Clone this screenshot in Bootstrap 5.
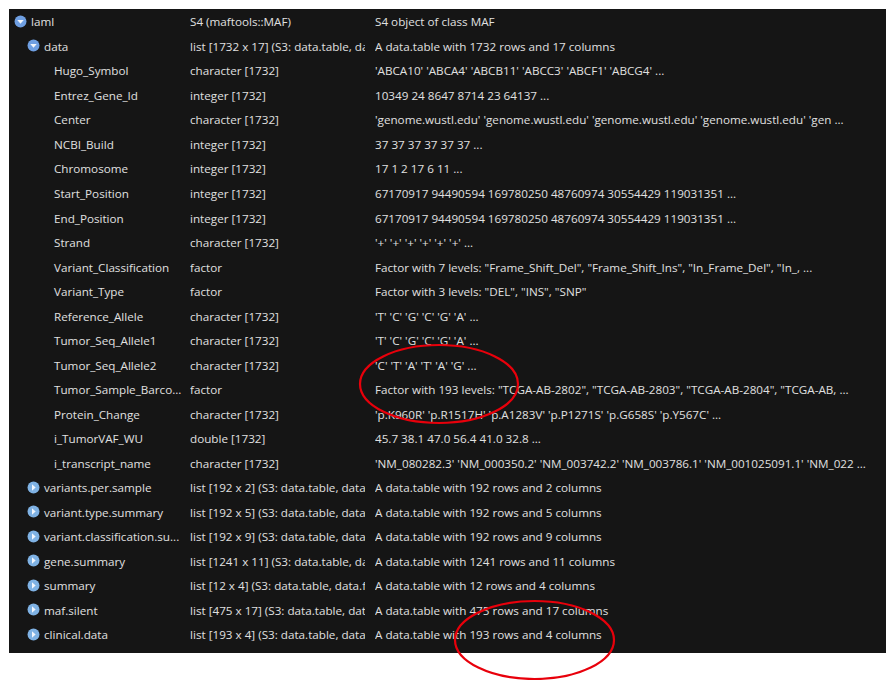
<!DOCTYPE html>
<html lang="en"><head><meta charset="utf-8"><title>laml</title>
<link href="https://cdn.jsdelivr.net/npm/bootstrap@5.3.0/dist/css/bootstrap.min.css" rel="stylesheet">
<style>
html,body{background:#fff;margin:0;height:680px;overflow:hidden}
.envpanel{margin:9px 0 0 9px;width:877px;height:644px;background:#151515;color:#e0e0e0;font:11.68px/24.52px "Open Sans",sans-serif;padding-top:1.4px}
.envrow{height:24.52px;white-space:nowrap}
.cname{width:181px;flex:none;overflow:hidden;text-overflow:ellipsis}
.lv0{padding-left:22px}.lv1{padding-left:35px}.lv2{padding-left:45px}
.ctype{width:175px;margin-right:10px;flex:none;overflow:hidden}
.cval{flex:1;overflow:hidden}
.twist{position:relative;display:inline-block;width:0;height:0}
.twist svg{position:absolute;left:-17.5px;top:-11.5px;width:13px;height:13px}
.scribble{position:absolute;left:0;top:0;pointer-events:none}
</style></head><body>
<div class="envpanel">
<div class="envrow d-flex"><div class="cname lv0"><span class="twist"><svg viewBox="0 0 12 12"><circle cx="6" cy="6" r="5.5" fill="#6f9fe2"/><path d="M3 4.6h6L6 8z" fill="#f2f6fc"/></svg></span>laml</div><div class="ctype">S4 (maftools::MAF)</div><div class="cval">S4 object of class MAF</div></div>
<div class="envrow d-flex"><div class="cname lv1"><span class="twist"><svg viewBox="0 0 12 12"><circle cx="6" cy="6" r="5.5" fill="#6f9fe2"/><path d="M3 4.6h6L6 8z" fill="#f2f6fc"/></svg></span>data</div><div class="ctype">list [1732 x 17] (S3: data.table, data.frame)</div><div class="cval">A data.table with 1732 rows and 17 columns</div></div>
<div class="envrow d-flex"><div class="cname lv2">Hugo_Symbol</div><div class="ctype">character [1732]</div><div class="cval">'ABCA10' 'ABCA4' 'ABCB11' 'ABCC3' 'ABCF1' 'ABCG4' ...</div></div>
<div class="envrow d-flex"><div class="cname lv2">Entrez_Gene_Id</div><div class="ctype">integer [1732]</div><div class="cval">10349 24 8647 8714 23 64137 ...</div></div>
<div class="envrow d-flex"><div class="cname lv2">Center</div><div class="ctype">character [1732]</div><div class="cval">'genome.wustl.edu' 'genome.wustl.edu' 'genome.wustl.edu' 'genome.wustl.edu' 'gen ...</div></div>
<div class="envrow d-flex"><div class="cname lv2">NCBI_Build</div><div class="ctype">integer [1732]</div><div class="cval">37 37 37 37 37 37 ...</div></div>
<div class="envrow d-flex"><div class="cname lv2">Chromosome</div><div class="ctype">integer [1732]</div><div class="cval">17 1 2 17 6 11 ...</div></div>
<div class="envrow d-flex"><div class="cname lv2">Start_Position</div><div class="ctype">integer [1732]</div><div class="cval">67170917 94490594 169780250 48760974 30554429 119031351 ...</div></div>
<div class="envrow d-flex"><div class="cname lv2">End_Position</div><div class="ctype">integer [1732]</div><div class="cval">67170917 94490594 169780250 48760974 30554429 119031351 ...</div></div>
<div class="envrow d-flex"><div class="cname lv2">Strand</div><div class="ctype">character [1732]</div><div class="cval">'+' '+' '+' '+' '+' '+' ...</div></div>
<div class="envrow d-flex"><div class="cname lv2">Variant_Classification</div><div class="ctype">factor</div><div class="cval">Factor with 7 levels: "Frame_Shift_Del", "Frame_Shift_Ins", "In_Frame_Del", "In_, ...</div></div>
<div class="envrow d-flex"><div class="cname lv2">Variant_Type</div><div class="ctype">factor</div><div class="cval">Factor with 3 levels: "DEL", "INS", "SNP"</div></div>
<div class="envrow d-flex"><div class="cname lv2">Reference_Allele</div><div class="ctype">character [1732]</div><div class="cval">'T' 'C' 'G' 'C' 'G' 'A' ...</div></div>
<div class="envrow d-flex"><div class="cname lv2">Tumor_Seq_Allele1</div><div class="ctype">character [1732]</div><div class="cval">'T' 'C' 'G' 'C' 'G' 'A' ...</div></div>
<div class="envrow d-flex"><div class="cname lv2">Tumor_Seq_Allele2</div><div class="ctype">character [1732]</div><div class="cval">'C' 'T' 'A' 'T' 'A' 'G' ...</div></div>
<div class="envrow d-flex"><div class="cname lv2">Tumor_Sample_Barco...</div><div class="ctype">factor</div><div class="cval">Factor with 193 levels: "TCGA-AB-2802", "TCGA-AB-2803", "TCGA-AB-2804", "TCGA-AB, ...</div></div>
<div class="envrow d-flex"><div class="cname lv2">Protein_Change</div><div class="ctype">character [1732]</div><div class="cval">'p.K960R' 'p.R1517H' 'p.A1283V' 'p.P1271S' 'p.G658S' 'p.Y567C' ...</div></div>
<div class="envrow d-flex"><div class="cname lv2">i_TumorVAF_WU</div><div class="ctype">double [1732]</div><div class="cval">45.7 38.1 47.0 56.4 41.0 32.8 ...</div></div>
<div class="envrow d-flex"><div class="cname lv2">i_transcript_name</div><div class="ctype">character [1732]</div><div class="cval">'NM_080282.3' 'NM_000350.2' 'NM_003742.2' 'NM_003786.1' 'NM_001025091.1' 'NM_022 ...</div></div>
<div class="envrow d-flex"><div class="cname lv1"><span class="twist"><svg viewBox="0 0 12 12"><circle cx="6" cy="6" r="5.5" fill="#7fb2e4"/><path d="M4.6 3v6L8 6z" fill="#f2f6fc"/></svg></span>variants.per.sample</div><div class="ctype">list [192 x 2] (S3: data.table, data.frame)</div><div class="cval">A data.table with 192 rows and 2 columns</div></div>
<div class="envrow d-flex"><div class="cname lv1"><span class="twist"><svg viewBox="0 0 12 12"><circle cx="6" cy="6" r="5.5" fill="#7fb2e4"/><path d="M4.6 3v6L8 6z" fill="#f2f6fc"/></svg></span>variant.type.summary</div><div class="ctype">list [192 x 5] (S3: data.table, data.frame)</div><div class="cval">A data.table with 192 rows and 5 columns</div></div>
<div class="envrow d-flex"><div class="cname lv1"><span class="twist"><svg viewBox="0 0 12 12"><circle cx="6" cy="6" r="5.5" fill="#7fb2e4"/><path d="M4.6 3v6L8 6z" fill="#f2f6fc"/></svg></span>variant.classification.su...</div><div class="ctype">list [192 x 9] (S3: data.table, data.frame)</div><div class="cval">A data.table with 192 rows and 9 columns</div></div>
<div class="envrow d-flex"><div class="cname lv1"><span class="twist"><svg viewBox="0 0 12 12"><circle cx="6" cy="6" r="5.5" fill="#7fb2e4"/><path d="M4.6 3v6L8 6z" fill="#f2f6fc"/></svg></span>gene.summary</div><div class="ctype">list [1241 x 11] (S3: data.table, data.frame)</div><div class="cval">A data.table with 1241 rows and 11 columns</div></div>
<div class="envrow d-flex"><div class="cname lv1"><span class="twist"><svg viewBox="0 0 12 12"><circle cx="6" cy="6" r="5.5" fill="#7fb2e4"/><path d="M4.6 3v6L8 6z" fill="#f2f6fc"/></svg></span>summary</div><div class="ctype">list [12 x 4] (S3: data.table, data.frame)</div><div class="cval">A data.table with 12 rows and 4 columns</div></div>
<div class="envrow d-flex"><div class="cname lv1"><span class="twist"><svg viewBox="0 0 12 12"><circle cx="6" cy="6" r="5.5" fill="#7fb2e4"/><path d="M4.6 3v6L8 6z" fill="#f2f6fc"/></svg></span>maf.silent</div><div class="ctype">list [475 x 17] (S3: data.table, data.frame)</div><div class="cval">A data.table with 475 rows and 17 columns</div></div>
<div class="envrow d-flex"><div class="cname lv1"><span class="twist"><svg viewBox="0 0 12 12"><circle cx="6" cy="6" r="5.5" fill="#7fb2e4"/><path d="M4.6 3v6L8 6z" fill="#f2f6fc"/></svg></span>clinical.data</div><div class="ctype">list [193 x 4] (S3: data.table, data.frame)</div><div class="cval">A data.table with 193 rows and 4 columns</div></div>
</div>
<svg class="scribble" width="886" height="680" viewBox="0 0 886 680"><ellipse cx="439" cy="384" rx="79" ry="39" fill="none" stroke="#e8000b" stroke-width="2.2"/><ellipse cx="534.5" cy="640" rx="79.5" ry="39" fill="none" stroke="#e8000b" stroke-width="2.2"/></svg>
</body></html>
